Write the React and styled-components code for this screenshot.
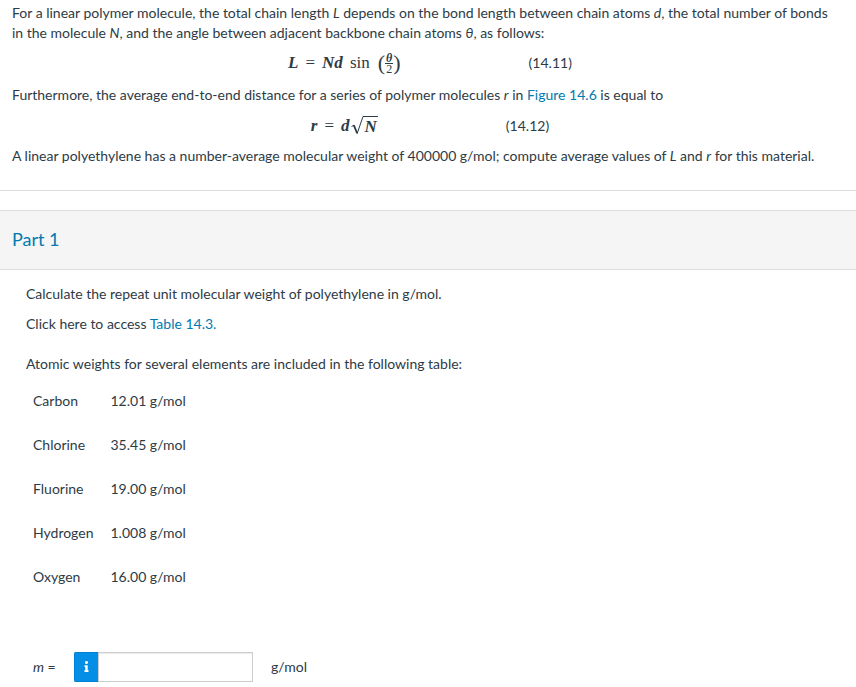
import styled, { createGlobalStyle } from "styled-components";
import React, { useState } from "react";
import { FaInfo } from "react-icons/fa";

const GlobalStyle = createGlobalStyle`
  * {
    box-sizing: border-box;
  }

  body {
    margin: 0;
    background-color: #ffffff;
    color: #2d3b45;
    font-family: Lato, "Liberation Sans", sans-serif;
    font-size: 14px;
    line-height: 20px;
  }
`;

const Intro = styled.section`
  padding: 3px 0 24px;
  border-bottom: 1px solid #dddddd;
`;

const Text = styled.p`
  margin: 0 0 ${(props) => props.$space || "0"};
`;

const IntroText = styled(Text)`
  padding: 0 20px 0 12px;
`;

const Link = styled.a`
  color: #007ab0;
  text-decoration: none;

  &:hover {
    text-decoration: underline;
  }
`;

const EquationRow = styled.div`
  display: flex;
  justify-content: center;
  align-items: center;
  gap: 128px;
  height: ${(props) => props.$height};
  margin-bottom: ${(props) => props.$space || "0"};
  padding-left: 4px;
`;

const Formula = styled.div`
  display: flex;
  align-items: center;
  font-family: "Liberation Serif", serif;
  font-size: 17px;
`;

const Variable = styled.i`
  font-weight: bold;
`;

const Equals = styled.span`
  margin: 0 7px;
`;

const Sine = styled.span`
  margin: 0 8px 0 7px;
`;

const Paren = styled.span`
  font-size: 22px;
`;

const Fraction = styled.span`
  display: flex;
  flex-direction: column;
  align-items: center;
  font-size: 12px;
  line-height: 10px;
`;

const Numerator = styled.i`
  padding: 0 1px;
  border-bottom: 1px solid #2d3b45;
  font-weight: bold;
`;

const Radical = styled.svg`
  display: block;
  width: 14px;
  height: 19px;
`;

const Radicand = styled.span`
  height: 19px;
  padding: 1px 1px 0;
  border-top: 1px solid #2d3b45;
  line-height: 17px;
`;

const PartHeader = styled.header`
  margin-top: 19px;
  padding: 18px 12px 20px;
  border-top: 1px solid #dddddd;
  border-bottom: 1px solid #dddddd;
  background-color: #f5f5f5;
`;

const PartTitle = styled.h2`
  margin: 0;
  color: #007ab0;
  font-size: 18px;
  font-weight: 400;
  line-height: 20px;
`;

const PartBody = styled.main`
  padding: 14px 26px 5px;
`;

const WeightTable = styled.table`
  margin: 5px 0 53px;
  border-collapse: collapse;
`;

const Cell = styled.td`
  padding: 12px 10px 12px 7px;
`;

const NameCell = styled(Cell).attrs({ as: "th", scope: "row" })`
  font-weight: 400;
  text-align: left;
`;

const AnswerRow = styled.form`
  display: flex;
  align-items: center;
  padding-left: 7px;
`;

const AnswerLabel = styled.label`
  width: 41px;
`;

const InfoButton = styled.button`
  display: flex;
  justify-content: center;
  align-items: center;
  width: 24px;
  height: 30px;
  padding: 0 0 2px;
  border: 1px solid #0280d6;
  border-right: 0;
  border-radius: 2px 0 0 2px;
  background-color: #048ee5;
  color: #ffffff;
  font-size: 11px;
  cursor: pointer;
`;

const AnswerInput = styled.input`
  width: 155px;
  height: 30px;
  padding: 4px 8px;
  border: 1px solid #cccccc;
  box-shadow: inset 0 1px 1px rgba(0, 0, 0, 0.08);
  color: inherit;
  font: inherit;
`;

const Unit = styled.span`
  margin-left: 18px;
`;

const weights = [
  { name: "Carbon", value: "12.01 g/mol" },
  { name: "Chlorine", value: "35.45 g/mol" },
  { name: "Fluorine", value: "19.00 g/mol" },
  { name: "Hydrogen", value: "1.008 g/mol" },
  { name: "Oxygen", value: "16.00 g/mol" },
];

const ChainLength = () => (
  <EquationRow $height="40px" $space="2px">
    <Formula>
      <Variable>L</Variable>
      <Equals>=</Equals>
      <Variable>Nd</Variable>
      <Sine>sin</Sine>
      <Paren>(</Paren>
      <Fraction>
        <Numerator>θ</Numerator>
        <span>2</span>
      </Fraction>
      <Paren>)</Paren>
    </Formula>
    <span>(14.11)</span>
  </EquationRow>
);

const EndToEnd = () => (
  <EquationRow $height="41px">
    <Formula>
      <Variable>r</Variable>
      <Equals>=</Equals>
      <Variable>d</Variable>
      <Radical viewBox="0 0 14 19" fill="none" stroke="#2d3b45">
        <path d="M1.5 10.5L4 9.2" strokeWidth="1" />
        <path d="M3.8 9.2L7 17" strokeWidth="1.8" />
        <path d="M7 18L13 0.5H14" strokeWidth="1" />
      </Radical>
      <Radicand>
        <Variable>N</Variable>
      </Radicand>
    </Formula>
    <span>(14.12)</span>
  </EquationRow>
);

export const App = () => {
  const [answer, setAnswer] = useState("");

  return (
    <>
      <GlobalStyle />
      <Intro>
        <IntroText>
          For a linear polymer molecule, the total chain length <i>L</i> depends
          on the bond length between chain atoms <i>d</i>, the total number of
          bonds in the molecule <i>N</i>, and the angle between adjacent
          backbone chain atoms <i>θ</i>, as follows:
        </IntroText>
        <ChainLength />
        <IntroText>
          Furthermore, the average end-to-end distance for a series of polymer
          molecules <i>r</i> in <Link href="#figure-14-6">Figure 14.6</Link> is
          equal to
        </IntroText>
        <EndToEnd />
        <IntroText>
          A linear polyethylene has a number-average molecular weight of 400000
          g/mol; compute average values of <i>L</i> and <i>r</i> for this
          material.
        </IntroText>
      </Intro>

      <PartHeader>
        <PartTitle>Part 1</PartTitle>
      </PartHeader>
      <PartBody>
        <Text $space="10px">
          Calculate the repeat unit molecular weight of polyethylene in g/mol.
        </Text>
        <Text $space="20px">
          Click here to access <Link href="#table-14-3">Table 14.3.</Link>
        </Text>
        <Text>
          Atomic weights for several elements are included in the following
          table:
        </Text>
        <WeightTable>
          <tbody>
            {weights.map((element) => (
              <tr key={element.name}>
                <NameCell>{element.name}</NameCell>
                <Cell>{element.value}</Cell>
              </tr>
            ))}
          </tbody>
        </WeightTable>
        <AnswerRow onSubmit={(event) => event.preventDefault()}>
          <AnswerLabel htmlFor="answer">
            <i>m</i> =
          </AnswerLabel>
          <InfoButton type="button" aria-label="Input help">
            <FaInfo />
          </InfoButton>
          <AnswerInput
            id="answer"
            type="text"
            value={answer}
            onChange={(event) => setAnswer(event.target.value)}
          />
          <Unit>g/mol</Unit>
        </AnswerRow>
      </PartBody>
    </>
  );
};

export default App;
